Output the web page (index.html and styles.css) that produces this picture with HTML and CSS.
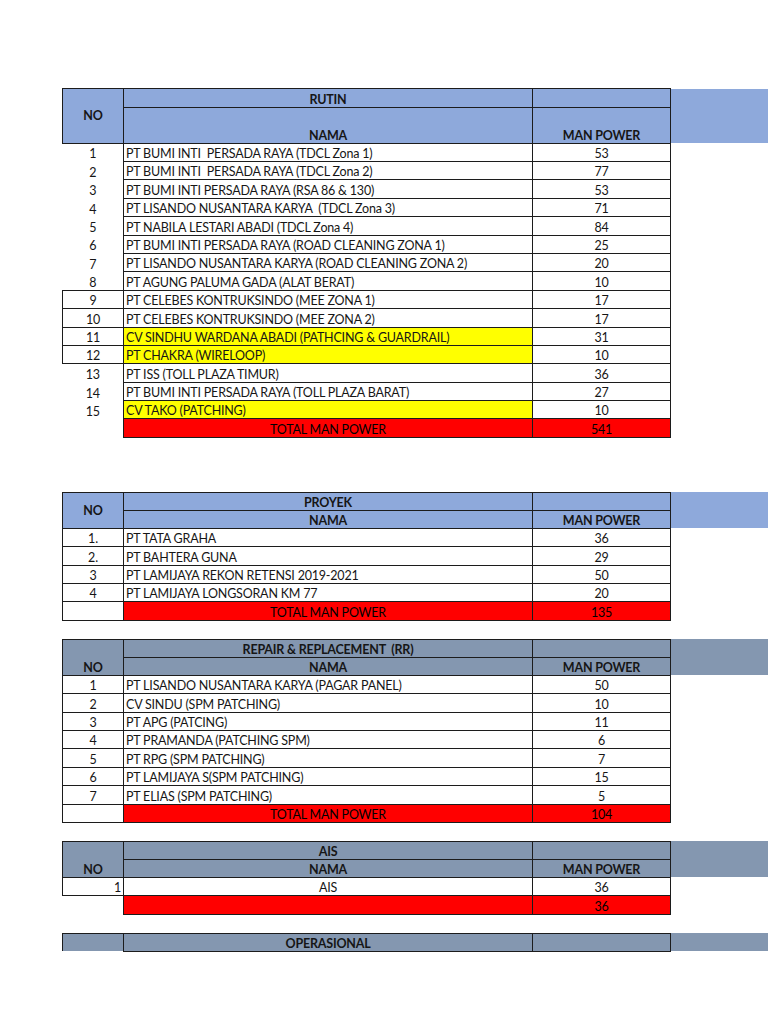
FILE: index.html
```html
<!DOCTYPE html>
<html>
<head>
<meta charset="utf-8">
<link rel="stylesheet" href="styles.css">
</head>
<body>
<div class="page">

<table class="sheet t1">
  <colgroup><col class="c-no"><col class="c-nama"><col class="c-mp"><col class="c-strip"></colgroup>
  <tr class="hrow first">
    <td rowspan="2" class="hd no-h mid">NO</td>
    <td class="hd">RUTIN</td>
    <td class="hd"></td>
    <td rowspan="2" class="strip blue"></td>
  </tr>
  <tr class="h-tall">
    <td class="hd bot">NAMA</td>
    <td class="hd bot">MAN POWER</td>
  </tr>
  <tr><td class="no nb">1</td><td class="nm">PT BUMI INTI&nbsp; PERSADA RAYA (TDCL Zona 1)</td><td class="mp">53</td><td class="e"></td></tr>
  <tr><td class="no nb">2</td><td class="nm">PT BUMI INTI&nbsp; PERSADA RAYA (TDCL Zona 2)</td><td class="mp">77</td><td class="e"></td></tr>
  <tr><td class="no nb">3</td><td class="nm">PT BUMI INTI PERSADA RAYA (RSA 86 &amp; 130)</td><td class="mp">53</td><td class="e"></td></tr>
  <tr><td class="no nb">4</td><td class="nm">PT LISANDO NUSANTARA KARYA&nbsp; (TDCL Zona 3)</td><td class="mp">71</td><td class="e"></td></tr>
  <tr><td class="no nb">5</td><td class="nm">PT NABILA LESTARI ABADI (TDCL Zona 4)</td><td class="mp">84</td><td class="e"></td></tr>
  <tr><td class="no nb">6</td><td class="nm">PT BUMI INTI PERSADA RAYA (ROAD CLEANING ZONA 1)</td><td class="mp">25</td><td class="e"></td></tr>
  <tr><td class="no nb">7</td><td class="nm">PT LISANDO NUSANTARA KARYA (ROAD CLEANING ZONA 2)</td><td class="mp">20</td><td class="e"></td></tr>
  <tr><td class="no nb">8</td><td class="nm">PT AGUNG PALUMA GADA (ALAT BERAT)</td><td class="mp">10</td><td class="e"></td></tr>
  <tr><td class="no">9</td><td class="nm">PT CELEBES KONTRUKSINDO (MEE ZONA 1)</td><td class="mp">17</td><td class="e"></td></tr>
  <tr><td class="no">10</td><td class="nm">PT CELEBES KONTRUKSINDO (MEE ZONA 2)</td><td class="mp">17</td><td class="e"></td></tr>
  <tr><td class="no">11</td><td class="nm yellow">CV SINDHU WARDANA ABADI (PATHCING &amp; GUARDRAIL)</td><td class="mp">31</td><td class="e"></td></tr>
  <tr><td class="no">12</td><td class="nm yellow">PT CHAKRA (WIRELOOP)</td><td class="mp">10</td><td class="e"></td></tr>
  <tr><td class="no nb">13</td><td class="nm">PT ISS (TOLL PLAZA TIMUR)</td><td class="mp">36</td><td class="e"></td></tr>
  <tr><td class="no nb">14</td><td class="nm">PT BUMI INTI PERSADA RAYA (TOLL PLAZA BARAT)</td><td class="mp">27</td><td class="e"></td></tr>
  <tr><td class="no nb">15</td><td class="nm yellow">CV TAKO (PATCHING)</td><td class="mp">10</td><td class="e"></td></tr>
  <tr><td class="no nb"></td><td class="tot">TOTAL MAN POWER</td><td class="tot">541</td><td class="e"></td></tr>
</table>

<table class="sheet t2">
  <colgroup><col class="c-no"><col class="c-nama"><col class="c-mp"><col class="c-strip"></colgroup>
  <tr class="hrow">
    <td rowspan="2" class="hd no-h mid">NO</td>
    <td class="hd">PROYEK</td>
    <td class="hd"></td>
    <td rowspan="2" class="strip blue"></td>
  </tr>
  <tr class="hrow">
    <td class="hd">NAMA</td>
    <td class="hd">MAN POWER</td>
  </tr>
  <tr><td class="no">1.</td><td class="nm">PT TATA GRAHA</td><td class="mp">36</td><td class="e"></td></tr>
  <tr><td class="no">2.</td><td class="nm">PT BAHTERA GUNA</td><td class="mp">29</td><td class="e"></td></tr>
  <tr><td class="no">3</td><td class="nm">PT LAMIJAYA REKON RETENSI 2019-2021</td><td class="mp">50</td><td class="e"></td></tr>
  <tr><td class="no">4</td><td class="nm">PT LAMIJAYA LONGSORAN KM 77</td><td class="mp">20</td><td class="e"></td></tr>
  <tr><td class="no"></td><td class="tot">TOTAL MAN POWER</td><td class="tot">135</td><td class="e"></td></tr>
</table>

<table class="sheet t3 grey">
  <colgroup><col class="c-no"><col class="c-nama"><col class="c-mp"><col class="c-strip"></colgroup>
  <tr class="hrow">
    <td rowspan="2" class="hd no-h bot">NO</td>
    <td class="hd">REPAIR &amp; REPLACEMENT&nbsp; (RR)</td>
    <td class="hd"></td>
    <td rowspan="2" class="strip"></td>
  </tr>
  <tr class="hrow">
    <td class="hd">NAMA</td>
    <td class="hd">MAN POWER</td>
  </tr>
  <tr><td class="no">1</td><td class="nm">PT LISANDO NUSANTARA KARYA (PAGAR PANEL)</td><td class="mp">50</td><td class="e"></td></tr>
  <tr><td class="no">2</td><td class="nm">CV SINDU (SPM PATCHING)</td><td class="mp">10</td><td class="e"></td></tr>
  <tr><td class="no">3</td><td class="nm">PT APG (PATCING)</td><td class="mp">11</td><td class="e"></td></tr>
  <tr><td class="no">4</td><td class="nm">PT PRAMANDA (PATCHING SPM)</td><td class="mp">6</td><td class="e"></td></tr>
  <tr><td class="no">5</td><td class="nm">PT RPG (SPM PATCHING)</td><td class="mp">7</td><td class="e"></td></tr>
  <tr><td class="no">6</td><td class="nm">PT LAMIJAYA S(SPM PATCHING)</td><td class="mp">15</td><td class="e"></td></tr>
  <tr><td class="no">7</td><td class="nm">PT ELIAS (SPM PATCHING)</td><td class="mp">5</td><td class="e"></td></tr>
  <tr><td class="no"></td><td class="tot">TOTAL MAN POWER</td><td class="tot">104</td><td class="e"></td></tr>
</table>

<table class="sheet t4 grey">
  <colgroup><col class="c-no"><col class="c-nama"><col class="c-mp"><col class="c-strip"></colgroup>
  <tr class="hrow">
    <td rowspan="2" class="hd no-h bot">NO</td>
    <td class="hd">AIS</td>
    <td class="hd"></td>
    <td rowspan="2" class="strip"></td>
  </tr>
  <tr class="hrow">
    <td class="hd">NAMA</td>
    <td class="hd">MAN POWER</td>
  </tr>
  <tr><td class="no right">1</td><td class="nm center">AIS</td><td class="mp">36</td><td class="e"></td></tr>
  <tr><td class="no nb"></td><td class="tot"></td><td class="tot">36</td><td class="e"></td></tr>
</table>

<table class="sheet t5 grey">
  <colgroup><col class="c-no"><col class="c-nama"><col class="c-mp"><col class="c-strip"></colgroup>
  <tr class="hrow">
    <td class="hd no-h open"></td>
    <td class="hd">OPERASIONAL</td>
    <td class="hd"></td>
    <td class="strip"></td>
  </tr>
</table>

</div>
</body>
</html>
```

FILE: styles.css
```css
html, body {
  margin: 0;
  padding: 0;
  background: #ffffff;
}

.page {
  padding: 88px 0 0 62px;
  display: flex;
  flex-direction: column;
  font-family: Lato, "Liberation Sans", sans-serif;
  font-size: 12.5px;
  letter-spacing: -0.2px;
  color: #161616;
}

.sheet {
  border-collapse: collapse;
  table-layout: fixed;
  width: 706px;
}

.t2 { margin-top: 54px; }
.t3, .t4, .t5 { margin-top: 18px; }

.c-no { width: 61px; }
.c-nama { width: 409px; }
.c-mp { width: 138px; }
.c-strip { width: 98px; }

.sheet td {
  height: 18.4px;
  padding: 0 2px;
  line-height: 15px;
  white-space: nowrap;
  overflow: hidden;
  border: 1px solid #1c1c1c;
  vertical-align: bottom;
  box-sizing: border-box;
}

.sheet .hrow td { height: 18px; }
.sheet .hrow.first td { height: 18.6px; }
.sheet .h-tall td { height: 36px; }

.hd {
  background: #8ea9db;
  font-weight: bold;
  text-align: center;
}

.grey .hd,
.grey .strip {
  background: #8497b0;
}

.blue { background: #8ea9db; }

.sheet td.strip {
  border: none;
}

.no-h { border-left-color: #444444; }
.mid { vertical-align: middle !important; }
.bot { vertical-align: bottom; }

.sheet td.open { border-bottom: none; }

.no {
  text-align: center;
  background: #ffffff;
}
.right { text-align: right !important; }

.sheet td.nb {
  border-left: none;
  border-top: none;
  border-bottom: none;
}

.nm { text-align: left; }
.center { text-align: center; }
.mp { text-align: center; }

.yellow { background: #ffff00; }

.sheet td.tot {
  background: #ff0000;
  color: #000000;
  text-align: center;
}

.sheet td.e {
  border: none;
  background: transparent;
}
```
